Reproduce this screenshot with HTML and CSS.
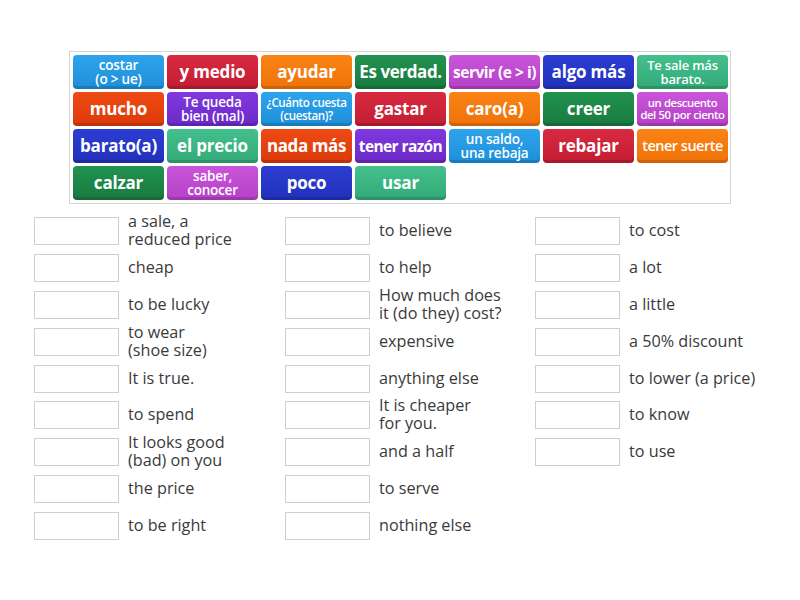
FILE: index.html
```html
<!DOCTYPE html>
<html lang="es">
<head>
<meta charset="utf-8">
<title>Match up</title>
<link rel="stylesheet" href="styles.css">
</head>
<body>
<div class="board">
  <div class="tiles">
    <div class="tile c-lblue s2">costar<br>(o &gt; ue)</div>
    <div class="tile c-red s17">y medio</div>
    <div class="tile c-orange s17">ayudar</div>
    <div class="tile c-green s16">Es verdad.</div>
    <div class="tile c-magenta s15">servir (e &gt; i)</div>
    <div class="tile c-dblue s17">algo más</div>
    <div class="tile c-teal s2t">Te sale más<br>barato.</div>

    <div class="tile c-redor s17">mucho</div>
    <div class="tile c-purple s2">Te queda<br>bien (mal)</div>
    <div class="tile c-lblue s2s">¿Cuánto cuesta<br>(cuestan)?</div>
    <div class="tile c-red s17">gastar</div>
    <div class="tile c-orange s17">caro(a)</div>
    <div class="tile c-green s17">creer</div>
    <div class="tile c-magenta s2xs">un descuento<br>del 50 por ciento</div>

    <div class="tile c-dblue s17">barato(a)</div>
    <div class="tile c-teal s17">el precio</div>
    <div class="tile c-redor s16">nada más</div>
    <div class="tile c-purple s14">tener razón</div>
    <div class="tile c-lblue s2">un saldo,<br>una rebaja</div>
    <div class="tile c-red s17">rebajar</div>
    <div class="tile c-orange s13">tener suerte</div>

    <div class="tile c-green s17">calzar</div>
    <div class="tile c-magenta s2">saber,<br>conocer</div>
    <div class="tile c-dblue s17">poco</div>
    <div class="tile c-teal s17">usar</div>
  </div>
</div>

<div class="answers">
  <div class="col">
    <div class="row"><span class="box"></span><span class="txt">a sale, a<br>reduced price</span></div>
    <div class="row"><span class="box"></span><span class="txt">cheap</span></div>
    <div class="row"><span class="box"></span><span class="txt">to be lucky</span></div>
    <div class="row"><span class="box"></span><span class="txt">to wear<br>(shoe size)</span></div>
    <div class="row"><span class="box"></span><span class="txt">It is true.</span></div>
    <div class="row"><span class="box"></span><span class="txt">to spend</span></div>
    <div class="row"><span class="box"></span><span class="txt">It looks good<br>(bad) on you</span></div>
    <div class="row"><span class="box"></span><span class="txt">the price</span></div>
    <div class="row"><span class="box"></span><span class="txt">to be right</span></div>
  </div>
  <div class="col">
    <div class="row"><span class="box"></span><span class="txt">to believe</span></div>
    <div class="row"><span class="box"></span><span class="txt">to help</span></div>
    <div class="row"><span class="box"></span><span class="txt">How much does<br>it (do they) cost?</span></div>
    <div class="row"><span class="box"></span><span class="txt">expensive</span></div>
    <div class="row"><span class="box"></span><span class="txt">anything else</span></div>
    <div class="row"><span class="box"></span><span class="txt">It is cheaper<br>for you.</span></div>
    <div class="row"><span class="box"></span><span class="txt">and a half</span></div>
    <div class="row"><span class="box"></span><span class="txt">to serve</span></div>
    <div class="row"><span class="box"></span><span class="txt">nothing else</span></div>
  </div>
  <div class="col">
    <div class="row"><span class="box"></span><span class="txt">to cost</span></div>
    <div class="row"><span class="box"></span><span class="txt">a lot</span></div>
    <div class="row"><span class="box"></span><span class="txt">a little</span></div>
    <div class="row"><span class="box"></span><span class="txt">a 50% discount</span></div>
    <div class="row"><span class="box"></span><span class="txt">to lower (a price)</span></div>
    <div class="row"><span class="box"></span><span class="txt">to know</span></div>
    <div class="row"><span class="box"></span><span class="txt">to use</span></div>
  </div>
</div>
</body>
</html>
```
FILE: styles.css
```css
html, body {
  margin: 0;
  padding: 0;
  background: #fff;
}
body {
  font-family: "Open Sans", "Liberation Sans", sans-serif;
  width: 800px;
  height: 600px;
  overflow: hidden;
}
.board {
  margin: 51px 0 0 69px;
  width: 662px;
  box-sizing: border-box;
  border: 1px solid #d4d4d4;
  padding: 3px 3px;
}
.tiles {
  display: grid;
  grid-template-columns: repeat(7, 91px);
  grid-auto-rows: 34px;
  gap: 3px;
}
.tile {
  display: flex;
  align-items: center;
  justify-content: center;
  text-align: center;
  color: #fff;
  font-weight: 700;
  border-radius: 4px;
  white-space: nowrap;
  letter-spacing: -0.2px;
  box-shadow: inset 0 -3px 0 rgba(0,0,0,0.14);
  box-sizing: border-box;
  overflow: hidden;
}
.s17 { font-size: 17px; line-height: 20px; }
.s16 { font-size: 17px; line-height: 20px; letter-spacing: -0.4px; }
.s15 { font-size: 15.5px; line-height: 20px; letter-spacing: -0.5px; }
.s14 { font-size: 15.5px; line-height: 20px; letter-spacing: -0.6px; }
.s13 { font-size: 14.5px; line-height: 20px; letter-spacing: -0.5px; font-weight: 600; }
.s2 { font-size: 13.5px; line-height: 14px; font-weight: 600; }
.s2t { font-size: 13px; line-height: 14px; font-weight: 600; }
.s2s { font-size: 11.6px; line-height: 13px; letter-spacing: -0.4px; font-weight: 600; }
.s2xs { font-size: 11.3px; line-height: 12.5px; font-weight: 600; letter-spacing: -0.4px; }

.c-lblue { background: linear-gradient(#2ea4ec, #1d8fd8); }
.c-red { background: linear-gradient(#d82a40, #c21d32); }
.c-orange { background: linear-gradient(#fa8316, #ef7208); }
.c-green { background: linear-gradient(#22924f, #187a3f); }
.c-magenta { background: linear-gradient(#c955da, #b541c8); }
.c-dblue { background: linear-gradient(#2c3dd2, #2231bb); }
.c-teal { background: linear-gradient(#43c08c, #33aa78); }
.c-redor { background: linear-gradient(#ee4a14, #dc3a0a); }
.c-purple { background: linear-gradient(#8038de, #6c29c8); }

.answers {
  display: grid;
  grid-template-columns: 251px 250px 250px;
  margin: 13px 0 0 34px;
}
.col {
  display: flex;
  flex-direction: column;
  gap: 8.9px;
}
.row {
  display: flex;
  align-items: center;
  height: 28px;
}
.box {
  width: 85px;
  height: 28px;
  box-sizing: border-box;
  border: 1px solid #cfcfcf;
  background: #fff;
  flex: none;
}
.txt {
  margin-left: 9px;
  margin-top: -2px;
  font-size: 16.2px;
  line-height: 18px;
  color: #3a3a3a;
  white-space: nowrap;
}
```
